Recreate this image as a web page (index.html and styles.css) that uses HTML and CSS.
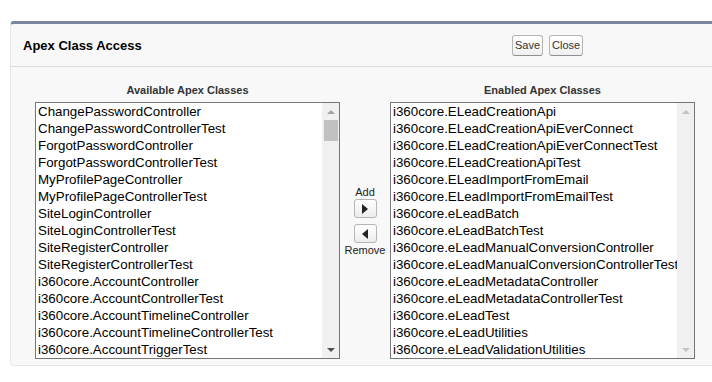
FILE: index.html
```html
<!DOCTYPE html>
<html lang="en">
<head>
  <meta charset="UTF-8">
  <title>Apex Class Access</title>
  <link rel="stylesheet" href="styles.css">
</head>
<body>
  <div class="panel">
    <div class="panel-header">
      <h2 class="panel-title">Apex Class Access</h2>
      <div class="panel-buttons">
        <button class="btn">Save</button>
        <button class="btn">Close</button>
      </div>
    </div>

    <div class="panel-body">
      <div class="picklist">
        <div class="pick-label">Available Apex Classes</div>
        <div class="listbox">
          <div class="options">
            <div class="option">ChangePasswordController</div>
            <div class="option">ChangePasswordControllerTest</div>
            <div class="option">ForgotPasswordController</div>
            <div class="option">ForgotPasswordControllerTest</div>
            <div class="option">MyProfilePageController</div>
            <div class="option">MyProfilePageControllerTest</div>
            <div class="option">SiteLoginController</div>
            <div class="option">SiteLoginControllerTest</div>
            <div class="option">SiteRegisterController</div>
            <div class="option">SiteRegisterControllerTest</div>
            <div class="option">i360core.AccountController</div>
            <div class="option">i360core.AccountControllerTest</div>
            <div class="option">i360core.AccountTimelineController</div>
            <div class="option">i360core.AccountTimelineControllerTest</div>
            <div class="option">i360core.AccountTriggerTest</div>
          </div>
          <div class="scrollbar">
            <div class="arrow up"></div>
            <div class="track"><div class="thumb"></div></div>
            <div class="arrow down"></div>
          </div>
        </div>
      </div>

      <div class="movers">
        <div class="mover-label">Add</div>
        <button class="mover">
          <svg width="6" height="10" viewBox="0 0 6 10"><polygon points="0,0 6,5 0,10" fill="#222"/></svg>
        </button>
        <button class="mover second">
          <svg width="6" height="10" viewBox="0 0 6 10"><polygon points="6,0 0,5 6,10" fill="#222"/></svg>
        </button>
        <div class="mover-label">Remove</div>
      </div>

      <div class="picklist">
        <div class="pick-label">Enabled Apex Classes</div>
        <div class="listbox">
          <div class="options">
            <div class="option">i360core.ELeadCreationApi</div>
            <div class="option">i360core.ELeadCreationApiEverConnect</div>
            <div class="option">i360core.ELeadCreationApiEverConnectTest</div>
            <div class="option">i360core.ELeadCreationApiTest</div>
            <div class="option">i360core.ELeadImportFromEmail</div>
            <div class="option">i360core.ELeadImportFromEmailTest</div>
            <div class="option">i360core.eLeadBatch</div>
            <div class="option">i360core.eLeadBatchTest</div>
            <div class="option">i360core.eLeadManualConversionController</div>
            <div class="option">i360core.eLeadManualConversionControllerTest</div>
            <div class="option">i360core.eLeadMetadataController</div>
            <div class="option">i360core.eLeadMetadataControllerTest</div>
            <div class="option">i360core.eLeadTest</div>
            <div class="option">i360core.eLeadUtilities</div>
            <div class="option">i360core.eLeadValidationUtilities</div>
          </div>
          <div class="scrollbar disabled">
            <div class="arrow up"></div>
            <div class="track"></div>
            <div class="arrow down"></div>
          </div>
        </div>
      </div>
    </div>
  </div>
</body>
</html>
```

FILE: styles.css
```css
body {
  margin: 0;
  background: #fff;
  font-family: 'Liberation Sans', Arial, sans-serif;
  color: #000;
}
.panel {
  box-sizing: border-box;
  width: 702px;
  margin: 21px 0 0 10px;
  background: #f8f8f8;
  border: 1px solid #e6e6e6;
  border-right: none;
  border-top: 3px solid #7a869e;
  border-radius: 4px 0 0 4px;
}
.panel-header {
  display: flex;
  align-items: center;
  height: 42px;
  padding-left: 12px;
  border-bottom: 1px solid #dbdbdb;
}
.panel-title {
  width: 489px;
  margin: 0;
  font-size: 13px;
  font-weight: bold;
}
.panel-buttons {
  display: flex;
  gap: 6px;
}
.btn {
  height: 21px;
  padding: 0 2px;
  font-family: inherit;
  font-size: 11px;
  color: #333;
  background: linear-gradient(#ffffff, #f0f0f0);
  border: 1px solid #b5b5b5;
  border-bottom-color: #8f8f8f;
  border-radius: 3px;
}
.panel-body {
  display: flex;
  align-items: center;
  padding: 17px 0 6px 24px;
}
.picklist {
  width: 305px;
}
.pick-label {
  text-align: center;
  font-size: 11px;
  line-height: 13px;
  font-weight: bold;
  color: #333;
  margin-bottom: 5px;
}
.listbox {
  display: flex;
  height: 255px;
  background: #fff;
  border: 1px solid #767676;
}
.options {
  flex: 1;
  overflow: hidden;
  padding-left: 2px;
}
.option {
  font-size: 13.33px;
  line-height: 17px;
  white-space: nowrap;
}
.scrollbar {
  width: 17px;
  display: flex;
  flex-direction: column;
  background: #f0f0f0;
}
.arrow {
  height: 17px;
  display: flex;
  align-items: center;
  justify-content: center;
}
.arrow::after {
  content: "";
  border-left: 4px solid transparent;
  border-right: 4px solid transparent;
}
.arrow.up::after {
  border-bottom: 4px solid #a3a3a3;
}
.arrow.down::after {
  border-top: 4px solid #505050;
}
.disabled .arrow.up::after {
  border-bottom-color: #c3c3c3;
}
.disabled .arrow.down::after {
  border-top-color: #c3c3c3;
}
.track {
  flex: 1;
}
.thumb {
  height: 21px;
  margin: 0 1px 0 2px;
  background: #c1c1c1;
}
.movers {
  width: 50px;
  display: flex;
  flex-direction: column;
  align-items: center;
}
.mover-label {
  font-size: 11px;
  line-height: 13px;
  color: #222;
}
.mover {
  width: 23px;
  height: 19px;
  padding: 0;
  display: flex;
  align-items: center;
  justify-content: center;
  background: linear-gradient(#ffffff, #ececec);
  border: 1px solid #b5b5b5;
  border-radius: 3px;
}
.mover.second {
  margin: 6px 0 1px;
}
```
